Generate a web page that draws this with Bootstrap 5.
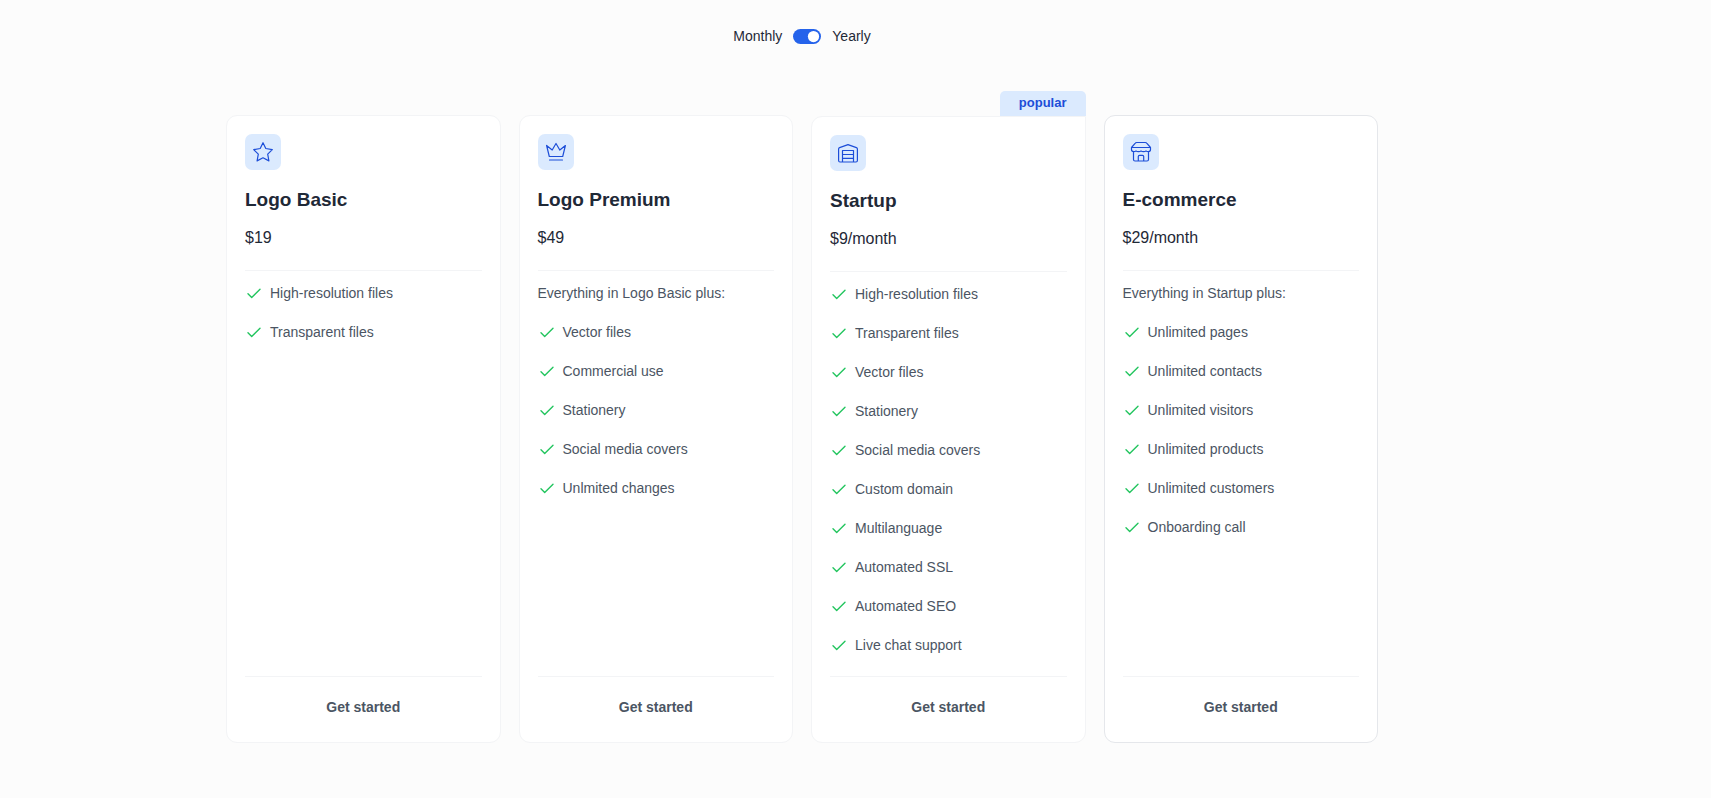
<!DOCTYPE html>
<html lang="en">
<head>
<meta charset="utf-8">
<meta name="viewport" content="width=device-width, initial-scale=1">
<title>Pricing</title>
<link href="https://cdn.jsdelivr.net/npm/bootstrap@5.3.0/dist/css/bootstrap.min.css" rel="stylesheet">
<style>
  body { font-family: "Liberation Sans", Arial, sans-serif; font-size: 14px; line-height: 20px; color: #1f2937; background: #fcfcfc; }
  .page { padding: 26px 107px 56px 0; }
  .pricing { max-width: 1152px; }
  .billing { gap: 11px; margin-bottom: 69px; }
  .billing .form-check { min-height: 0; }
  .billing .form-check-input { width: 28px; height: 15px; border: 0; background-color: #2563eb; box-shadow: none; }
  .plans { display: grid; grid-template-columns: repeat(4, minmax(0, 1fr)); gap: 18px; }
  .plan { --bs-card-border-color: #f3f4f6; --bs-card-border-radius: 11px; --bs-card-bg: #fff; padding: 18px; padding-bottom: 23px; color: inherit; }
  .plan-strong { --bs-card-border-color: #e5e7eb; }
  .plan-featured { border-top-right-radius: 0; }
  .featured { margin-top: -24px; }
  .tab-label { height: 25px; padding: 0 19px; font-size: 13px; line-height: 23px; color: #1d4ed8; background: #dbeafe; border-radius: 5px 5px 0 0; }
  .tile { width: 36px; height: 36px; border-radius: 7px; background: #dbeafe; fill: none; stroke: #1d4ed8; stroke-width: 1.2; stroke-linejoin: round; stroke-linecap: round; }
  .plan h2 { margin: 16px 0 12px; font-size: 19px; line-height: 28px; font-weight: 700; }
  .price { font-size: 16px; line-height: 24px; padding-bottom: 20px; border-bottom: 1px solid #f3f4f6; }
  .features { padding-top: 2px; margin-bottom: 12px; color: #4b5563; }
  .features li { height: 39px; gap: 7px; }
  .tick { width: 18px; height: 18px; fill: none; stroke: #22c55e; stroke-width: 1.4; stroke-linecap: round; stroke-linejoin: round; }
  .plan-foot { padding-top: 18px; border-top: 1px solid #f3f4f6; }
  .plan-foot .btn { --bs-btn-color: #4b5563; --bs-btn-padding-y: 0; font-size: 14px; line-height: 24px; border: 0; }
  @media (max-width: 1100px) {
    .page { padding-left: 16px; padding-right: 16px; }
    .plans { grid-template-columns: repeat(auto-fit, minmax(240px, 1fr)); }
    .featured { margin-top: 0; }
  }
</style>
</head>
<body>
<svg class="d-none" aria-hidden="true">
  <symbol id="tick" viewBox="0 0 18 18"><path d="M3 9.8 6.7 13.4 15 5.3"/></symbol>
</svg>
<main class="page">
  <div class="pricing mx-auto">
    <div class="billing d-flex justify-content-center align-items-center">
      <label for="yearly">Monthly</label>
      <div class="form-check form-switch d-flex p-0 m-0">
        <input class="form-check-input m-0 float-none" type="checkbox" role="switch" id="yearly" checked>
      </div>
      <label for="yearly">Yearly</label>
    </div>

    <div class="plans">
      <section class="plan card">
        <svg class="tile" viewBox="0 0 36 36" aria-hidden="true"><path d="M18 8.7 20.8 14.5 27.3 15.6 22.7 20.1 23.9 26.9 18 23.8 12.1 26.9 13.3 20.1 8.7 15.6 15.2 14.5Z"/></svg>
        <h2>Logo Basic</h2>
        <div class="price">$19</div>
        <ul class="features list-unstyled">
          <li class="d-flex align-items-center"><svg class="tick"><use href="#tick"/></svg>High-resolution files</li>
          <li class="d-flex align-items-center"><svg class="tick"><use href="#tick"/></svg>Transparent files</li>
        </ul>
        <div class="plan-foot mt-auto"><button type="button" class="btn fw-bold w-100">Get started</button></div>
      </section>

      <section class="plan card">
        <svg class="tile" viewBox="0 0 36 36" aria-hidden="true"><path d="M8.6 11.5 11.3 22.5H24.7L27.4 11.5 21.8 16 18 9.5 14.2 16ZM11.5 26H24.5"/></svg>
        <h2>Logo Premium</h2>
        <div class="price">$49</div>
        <ul class="features list-unstyled">
          <li class="d-flex align-items-center">Everything in Logo Basic plus:</li>
          <li class="d-flex align-items-center"><svg class="tick"><use href="#tick"/></svg>Vector files</li>
          <li class="d-flex align-items-center"><svg class="tick"><use href="#tick"/></svg>Commercial use</li>
          <li class="d-flex align-items-center"><svg class="tick"><use href="#tick"/></svg>Stationery</li>
          <li class="d-flex align-items-center"><svg class="tick"><use href="#tick"/></svg>Social media covers</li>
          <li class="d-flex align-items-center"><svg class="tick"><use href="#tick"/></svg>Unlmited changes</li>
        </ul>
        <div class="plan-foot mt-auto"><button type="button" class="btn fw-bold w-100">Get started</button></div>
      </section>

      <div class="featured d-flex flex-column">
        <div class="tab-label align-self-end fw-bold">popular</div>
        <section class="plan plan-featured card flex-grow-1">
          <svg class="tile" viewBox="0 0 36 36" aria-hidden="true"><path d="M8.6 14Q8.6 13 9.6 12.6L18 9.6 26.4 12.6Q27.4 13 27.4 14V25.5Q27.4 27 26 27H10Q8.6 27 8.6 25.5ZM12.5 27V15.5H23.5V27M12.5 19.5H23.5M12.5 23.3H23.5"/></svg>
          <h2>Startup</h2>
          <div class="price">$9/month</div>
          <ul class="features list-unstyled">
            <li class="d-flex align-items-center"><svg class="tick"><use href="#tick"/></svg>High-resolution files</li>
            <li class="d-flex align-items-center"><svg class="tick"><use href="#tick"/></svg>Transparent files</li>
            <li class="d-flex align-items-center"><svg class="tick"><use href="#tick"/></svg>Vector files</li>
            <li class="d-flex align-items-center"><svg class="tick"><use href="#tick"/></svg>Stationery</li>
            <li class="d-flex align-items-center"><svg class="tick"><use href="#tick"/></svg>Social media covers</li>
            <li class="d-flex align-items-center"><svg class="tick"><use href="#tick"/></svg>Custom domain</li>
            <li class="d-flex align-items-center"><svg class="tick"><use href="#tick"/></svg>Multilanguage</li>
            <li class="d-flex align-items-center"><svg class="tick"><use href="#tick"/></svg>Automated SSL</li>
            <li class="d-flex align-items-center"><svg class="tick"><use href="#tick"/></svg>Automated SEO</li>
            <li class="d-flex align-items-center"><svg class="tick"><use href="#tick"/></svg>Live chat support</li>
          </ul>
          <div class="plan-foot mt-auto"><button type="button" class="btn fw-bold w-100">Get started</button></div>
        </section>
      </div>

      <section class="plan plan-strong card">
        <svg class="tile" viewBox="0 0 36 36" aria-hidden="true"><path d="M8.5 13.5 12.3 9.2Q12.8 8.5 13.6 8.5H22.4Q23.2 8.5 23.7 9.2L27.5 13.5ZM8.5 13.5V15.6Q8.5 17.6 10.5 17.6 12 17.6 13 17 14 17.6 15.5 17.6 17 17.6 18 17 19 17.6 20.5 17.6 22 17.6 23 17 24 17.6 25.5 17.6 27.5 17.6 27.5 15.6V13.5M10.5 17.6V25.5Q10.5 27 12 27H24Q25.5 27 25.5 25.5V17.6M15.3 27V22.5Q15.3 21.3 16.5 21.3H19.5Q20.7 21.3 20.7 22.5V27"/></svg>
        <h2>E-commerce</h2>
        <div class="price">$29/month</div>
        <ul class="features list-unstyled">
          <li class="d-flex align-items-center">Everything in Startup plus:</li>
          <li class="d-flex align-items-center"><svg class="tick"><use href="#tick"/></svg>Unlimited pages</li>
          <li class="d-flex align-items-center"><svg class="tick"><use href="#tick"/></svg>Unlimited contacts</li>
          <li class="d-flex align-items-center"><svg class="tick"><use href="#tick"/></svg>Unlimited visitors</li>
          <li class="d-flex align-items-center"><svg class="tick"><use href="#tick"/></svg>Unlimited products</li>
          <li class="d-flex align-items-center"><svg class="tick"><use href="#tick"/></svg>Unlimited customers</li>
          <li class="d-flex align-items-center"><svg class="tick"><use href="#tick"/></svg>Onboarding call</li>
        </ul>
        <div class="plan-foot mt-auto"><button type="button" class="btn fw-bold w-100">Get started</button></div>
      </section>
    </div>
  </div>
</main>
<script src="https://cdn.jsdelivr.net/npm/bootstrap@5.3.0/dist/js/bootstrap.bundle.min.js"></script>
</body>
</html>
